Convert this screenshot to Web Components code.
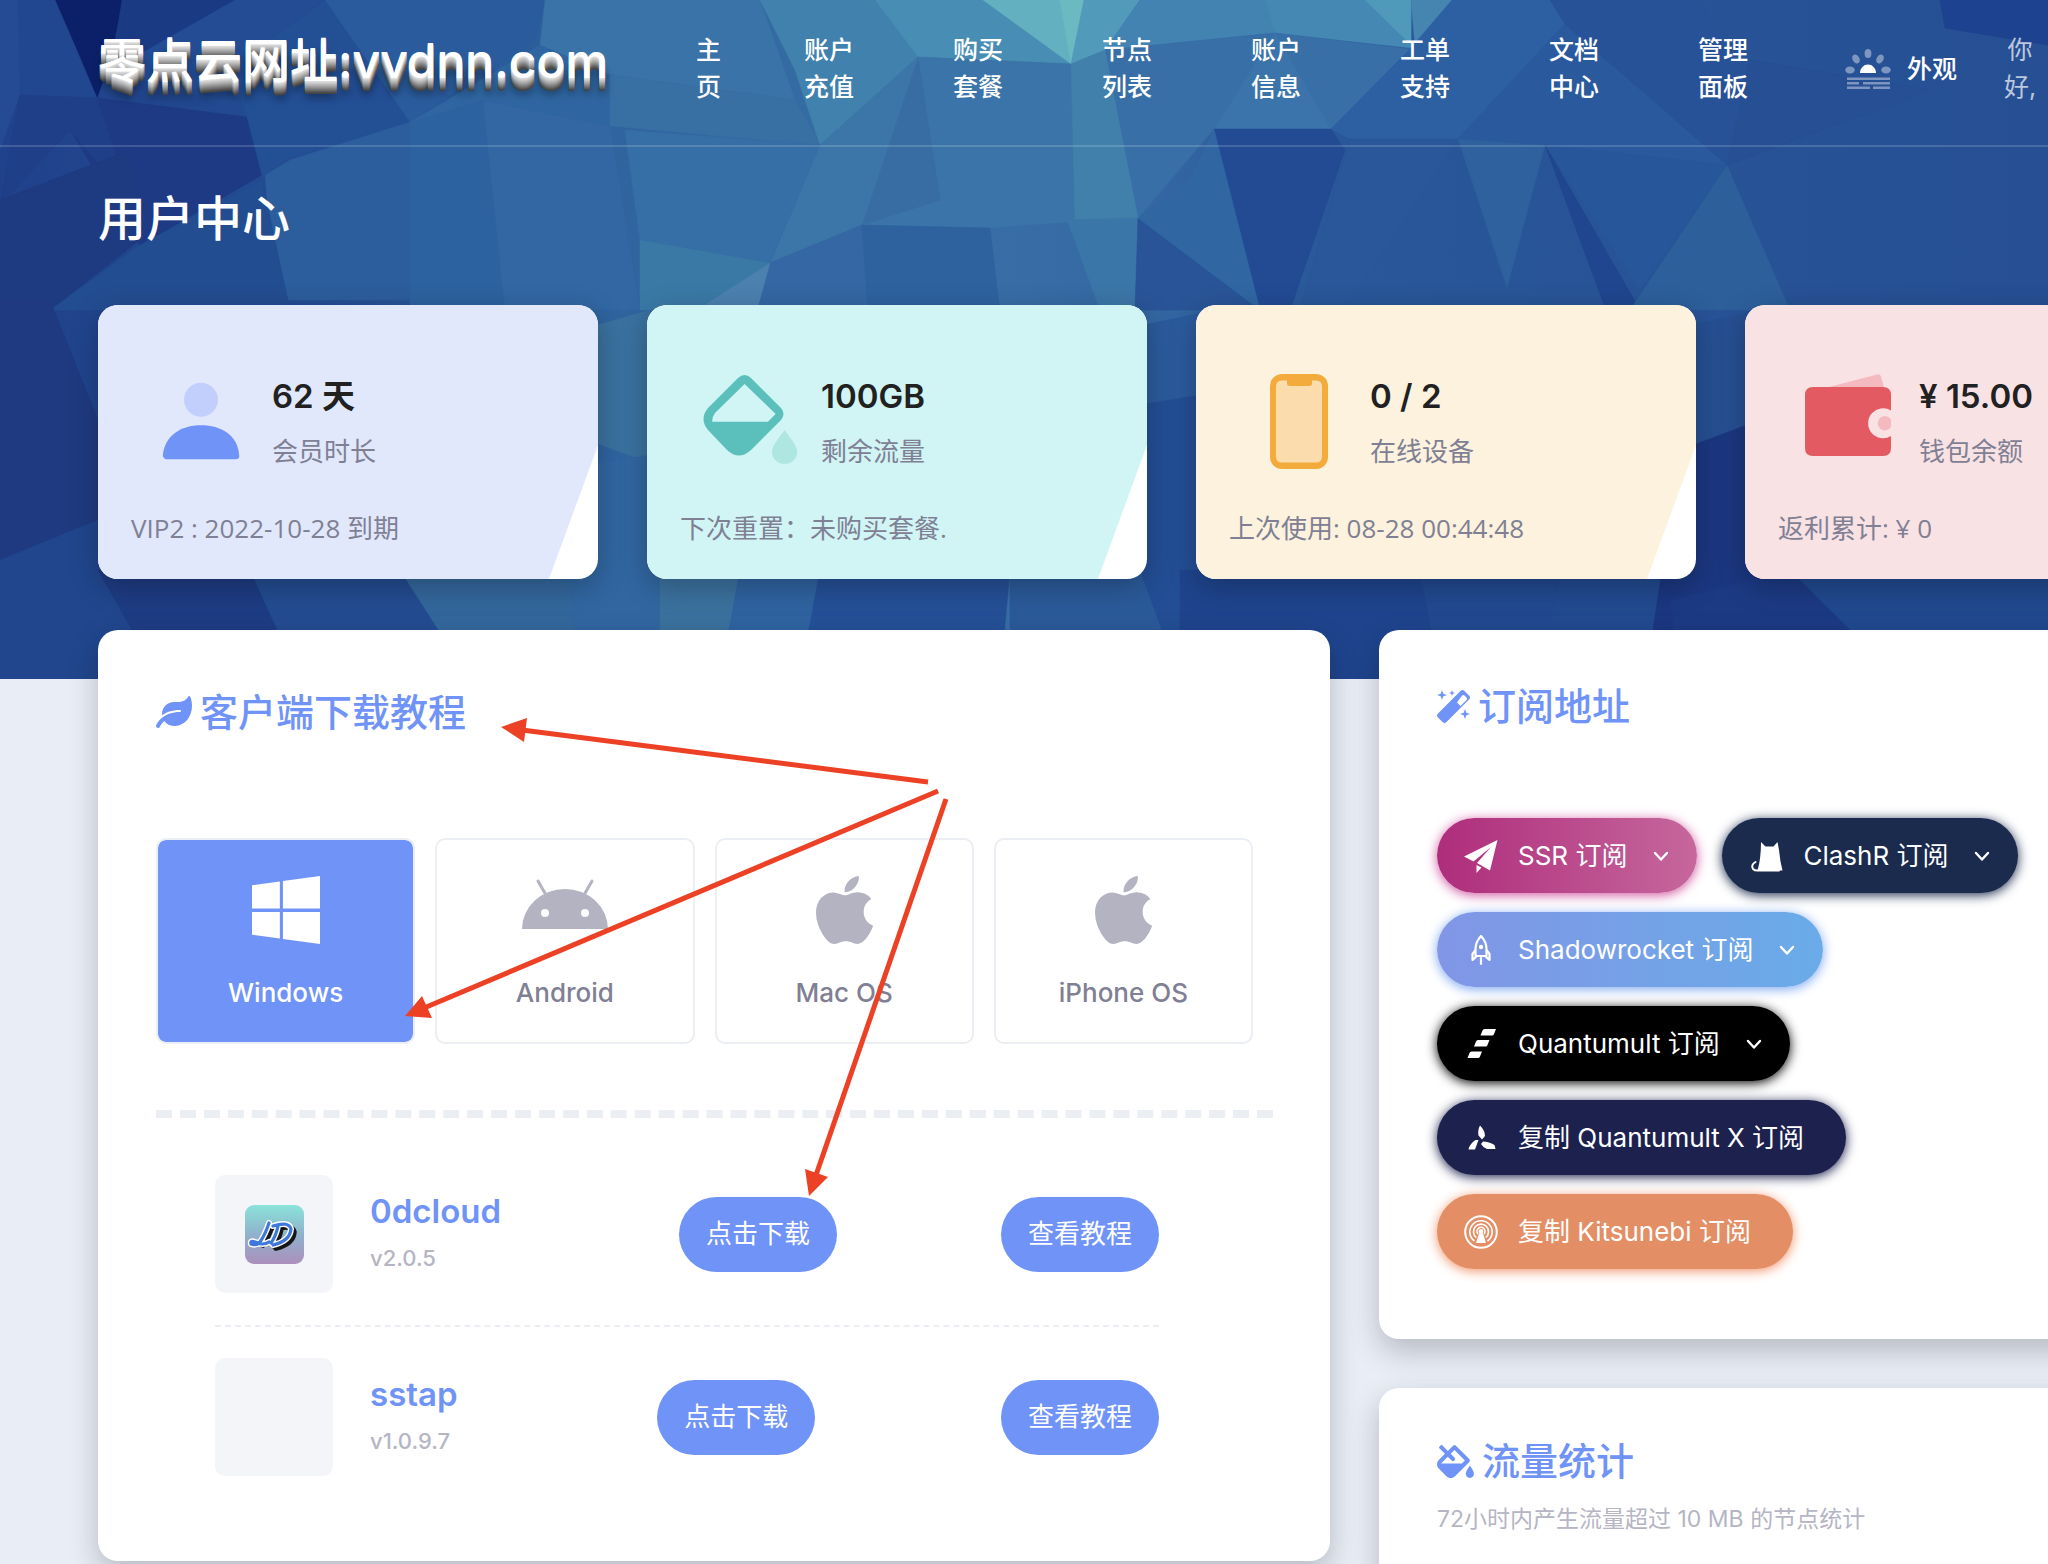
<!DOCTYPE html>
<html lang="zh-CN">
<head>
<meta charset="utf-8">
<meta name="viewport" content="width=device-width, initial-scale=1">
<title>用户中心</title>
<style>
  html, body { margin: 0; height: 100%; }
  body {
    overflow: hidden;
    background: #e9edf6;
    font-family: Inter, "Noto Sans CJK SC", sans-serif;
    font-size: 26px;
    color: #7f8094;
  }
</style>
</head>
<body>
<user-dashboard></user-dashboard>

<script>
const ICONS = {
  sunrise: [46, 41, '0 0 46 41', `<g fill="#fff" opacity=".4"><ellipse cx="23" cy="4.500" rx="3.400" ry="4.500"/><ellipse cx="11" cy="10" rx="3.400" ry="4.800" transform="rotate(-32 11 10)"/><ellipse cx="35" cy="10" rx="3.400" ry="4.800" transform="rotate(32 35 10)"/><ellipse cx="5" cy="21" rx="4.800" ry="3.500"/><ellipse cx="41" cy="21" rx="4.800" ry="3.500"/><path d="M2 28.500h43v2.500H2zM2 33h12v2.500H2zM18 33h27v2.500H18zM2 37.500h23v2.500H2zM28 37.500h17v2.500H28z"/></g><path fill="#fff" d="M15 24a8 8.500 0 0 1 16 0z"/>`],
  user: [102, 102, '0 0 24 24', `<circle cx="12" cy="7" r="4" fill="#c2cffc"/><path fill="#7093f8" d="M3 20.200C3.390 15.430 7.260 13 11.980 13 16.770 13 20.700 15.290 21 20.200c.01.2 0 .8-.75.8H3.730c-.25 0-.75-.54-.73-.8z"/>`],
  bucket: [102, 102, '0 0 102 102', `<path fill="#5bc0bc" fill-rule="evenodd" d="M39 8q6.600-6 13 0L82 38q5 6 0 12L52 80q-12 11-24 0L9 60Q0 49 9 38zM45.600 14 16 43q-3 4-2.800 8.700h55.700l7.800-7.700z"/><path fill="#aee7e2" d="M85.600 60C80 68 73 75 73 82a12.600 12 0 0 0 25.200 0c0-7-7-14-12.600-22z"/>`],
  phone: [102, 102, '0 0 102 102', `<rect x="22" y="4" width="58" height="95" rx="12" fill="#f3ac3c"/><path fill="#fadcad" d="M34 10.500h5v3q0 2.500 3 2.500h19q3 0 3-2.500v-3h4q6 0 6 6v70q0 6-6 6H34q-6 0-6-6v-70q0-6 6-6z"/>`],
  wallet: [102, 102, '0 0 102 102', `<path fill="#f5b9c0" d="M32 17 80 4.500q3-1 4 2L87 17z"/><path fill="#e45a63" d="M16 17h70q8 0 8 8v15.500A15 15 0 1 0 94 66v12q0 8-8 8H16q-8 0-8-8V25q0-8 8-8z"/><path fill="#f5b9c0" d="M94 49.500v7.500a7.200 7.200 0 1 1 0-7.500z"/>`],
  leaf: [36, 32, '0 0 576 512', `<path fill="currentColor" d="M546.200 9.700c-5.600-12.500-21.600-13-28.300-1.200C486.900 62.400 431.400 96 368 96h-80C182 96 96 182 96 288c0 7 .8 13.700 1.500 20.500C161.300 262.800 253.400 224 384 224c8.800 0 16 7.200 16 16s-7.200 16-16 16C132.600 256 26 410.100 2.400 468c-6.600 16.300 1.200 34.900 17.500 41.600 16.400 6.800 35-1.100 41.800-17.300 1.500-3.600 20.900-47.900 71.900-90.600 32.400 43.900 94 85.800 174.900 77.200C465.500 467.500 576 326.700 576 154.300c0-50.200-10.800-102.200-29.800-144.600z"/>`],
  wand: [33, 33, '0 0 33 33', `<g fill="currentColor"><path fill-rule="evenodd" d="M1 23.500 23.500 1q2-2 4 0L32 5.500q2 2 0 4L9.500 32q-2 2-4 0L1 27.500q-2-2 0-4zM20 12.500l3.500 3.500 6-6q1-1.500 0-2.500l-2-2q-1-1-2.500 0z"/><path d="M5 0 6.300 3.700 10 5 6.300 6.300 5 10 3.700 6.300 0 5l3.700-1.300zM15 0l.8 2.200L18 3l-2.200.8L15 6l-.8-2.200L12 3l2.200-.8zM28 19l1.300 3.700L33 24l-3.700 1.300L28 29l-1.300-3.700L23 24l3.700-1.300z"/></g>`],
  drip: [37, 33, '0 0 576 512', `<path fill="currentColor" d="M512 320s-64 92.650-64 128c0 35.350 28.660 64 64 64s64-28.650 64-64-64-128-64-128zm-9.370-102.940L294.940 9.370C288.690 3.120 280.500 0 272.310 0s-16.380 3.120-22.620 9.370l-81.580 81.580L81.930 4.760c-6.250-6.250-16.380-6.250-22.620 0L36.690 27.380c-6.240 6.250-6.240 16.380 0 22.620l86.190 86.180-94.760 94.760c-37.490 37.480-37.490 98.260 0 135.750l117.190 117.190c18.740 18.740 43.310 28.120 67.870 28.120 24.570 0 49.130-9.370 67.870-28.120l221.570-221.570c12.500-12.500 12.500-32.750.01-45.250zm-116.220 70.970H65.930c1.360-3.840 3.570-7.980 7.430-11.830l13.150-13.150 81.610-81.610 58.600 58.600c12.490 12.490 32.750 12.490 45.240 0s12.490-32.750 0-45.240l-58.610-58.600 58.950-58.950 162.440 162.440-48.340 48.340z"/>`],
  windows: [68, 68, '0 32 448 448', `<path fill="currentColor" d="M0 93.700l183.600-25.300v177.400H0V93.700zm0 324.600l183.600 25.300V268.400H0v149.900zm203.800 28L448 480V268.400H203.800v177.900zm0-380.600v180.100H448V32L203.800 65.700z"/>`],
  android: [86, 68, '0 0 86 68', `<path fill="currentColor" fill-rule="evenodd" d="M0 53a43 40 0 0 1 86 0zM23 41a4 4 0 1 0 0-8 4 4 0 0 0 0 8zM63 41a4 4 0 1 0 0-8 4 4 0 0 0 0 8z"/><path stroke="currentColor" stroke-width="3" stroke-linecap="round" d="M16 5l8 14M70 5l-8 14"/>`],
  apple: [57, 68, '4 32 376 448', `<path fill="currentColor" d="M318.700 268.700c-.2-36.700 16.400-64.400 50-84.800-18.800-26.900-47.200-41.700-84.700-44.600-35.500-2.800-74.300 20.700-88.500 20.700-15 0-49.400-19.700-76.400-19.700C63.300 141.200 4 184.800 4 273.500q0 39.300 14.400 81.200c12.800 36.700 59 126.700 107.200 125.200 25.200-.6 43-17.900 75.800-17.900 31.800 0 48.300 17.900 76.400 17.900 48.600-.7 90.400-82.500 102.600-119.300-65.200-30.700-61.700-90-61.700-91.900zm-56.600-164.200c27.300-32.400 24.800-61.900 24-72.500-24.100 1.400-52 16.400-67.900 34.900-17.500 19.800-27.800 44.300-25.600 71.900 26.100 2 49.900-11.400 69.500-34.300z"/>`],
  plane: [34, 34, '0 0 34 34', `<path fill="currentColor" d="M33.500 1 0 17.500l9.500 5L27 8 13 24l13 7.500zM12.500 26v8l5-5.500z"/>`],
  cat: [34, 34, '0 0 34 34', `<path fill="currentColor" d="M12 3l4.500 4.500h8L28.500 3l1.500 8q1 11 3.500 20.500H8.500Q12 20 12 3z"/><path fill="none" stroke="currentColor" stroke-width="2" stroke-linecap="round" d="M6.500 23q-5 3-2.500 7 2 2 6 1.500h20"/>`],
  rocket: [34, 34, '0 0 34 34', `<g fill="none" stroke="currentColor" stroke-width="2.200" stroke-linejoin="round"><path d="M17 3q-5.500 6-5.500 13v7h11v-7Q22.500 9 17 3z"/><path d="M11.500 17 8.500 21v6l4-3.500M22.500 17l3 4v6l-4-3.500"/><path d="M17 25v6" stroke-linecap="round"/></g><circle cx="17" cy="14" r="2.200" fill="currentColor"/>`],
  bars: [34, 34, '0 0 34 34', `<path fill="currentColor" d="M18.500 3.500q.5-1.500 2-1.500H32l-2 5q-.5 1.500-2 1.500H16.500zM12 14.500q.5-1.500 2-1.500h11.500l-2 5q-.5 1.500-2 1.500H10zM5.500 26q.5-1.500 2-1.500H18l-2 5q-.5 1.500-2 1.500H3.500z"/>`],
  blades: [34, 34, '0 0 34 34', `<path fill="currentColor" d="M16 4.500q5 5 5 10.500l-3 3.500-3.500-4Q13.500 9 16 4.500zM14.500 19l-3.500 9.500H4.500q1-5.500 7-9.500zM19 20.500q6 0 11.500 3.500l1 4H23q-4-1.500-6-5z"/>`],
  podcast: [34, 34, '0 0 34 34', `<g fill="none" stroke="currentColor"><circle cx="17" cy="17" r="15.800" stroke-width="2"/><path stroke-width="1.600" d="M10.500 26a11.200 11.200 0 1 1 13 0M12.300 22.500a7.500 7.500 0 1 1 9.400 0M14 19a4 4 0 1 1 6 0"/></g><circle cx="17" cy="16.500" r="2.400" fill="currentColor"/><path fill="currentColor" d="M15 18.500h4l3 9.500H12z"/>`],
  chevron: [16, 16, '0 0 16 16', `<path fill="none" stroke="currentColor" stroke-width="2.400" stroke-linecap="round" stroke-linejoin="round" d="M2 5l6 6.500L14 5"/>`],
  ld: [59, 59, '0 0 59 59', `<defs><linearGradient id="g" x1="0" y1="0" x2="0" y2="1"><stop offset="0" stop-color="#8be3da"/><stop offset=".5" stop-color="#8fb2cb"/><stop offset="1" stop-color="#ab8fbd"/></linearGradient></defs><rect width="59" height="59" rx="9" fill="url(#g)"/><g fill="none" stroke-linecap="round" stroke-linejoin="round"><path transform="translate(3 3)" stroke="#161616" stroke-width="5.500" d="M24 18q-4 12-9 19M33 21q-2 10-7 17M28 21q16-5 18 3-1 12-18 16"/><path stroke="#fff" stroke-width="6" d="M24 18q-4 12-9 19-4 4-9 2-1-4 4-2 8 4 14 0M33 21q-2 10-7 17M28 21q16-5 18 3-1 12-18 16"/><path stroke="#3f78dc" stroke-width="3.200" d="M24 18q-4 12-9 19-4 4-9 2-1-4 4-2 8 4 14 0M33 21q-2 10-7 17M28 21q16-5 18 3-1 12-18 16"/></g>`]
};

/* Shared base: renders the class template into an open shadow root. */
class Part extends HTMLElement {
  connectedCallback() {
    if (this.shadowRoot) return;
    const t = document.createElement('template');
    t.innerHTML = this.view();
    this.attachShadow({ mode: 'open' }).append(t.content.cloneNode(true));
  }
  at(n) { return this.getAttribute(n) || ''; }
}

customElements.define('svg-icon', class extends Part {
  view() {
    const [w, h, box, body] = ICONS[this.at('name')];
    return `<style>:host{display:block;flex:none}svg{display:block}</style>
      <svg width="${w}" height="${h}" viewBox="${box}" fill="none" aria-hidden="true">${body}</svg>`;
  }
});

customElements.define('nav-item', class extends Part {
  view() {
    return `<style>
      :host{display:block;flex:none;width:66px}
      :host([short]){width:25px}
      a{display:block;color:#fff;text-decoration:none;font-size:25px;line-height:37px;font-weight:500}
    </style><a href="#"><slot></slot></a>`;
  }
});

customElements.define('site-header', class extends Part {
  view() {
    return `<style>
      :host{display:block;border-bottom:2px solid rgba(255,255,255,.16)}
      .bar{display:flex;align-items:center;padding:32px 98px 39px;min-width:2147px}
      .logo{flex:0 0 598px;font-size:48px;line-height:58px;padding-bottom:16px;font-weight:500;color:#fff;text-decoration:none;white-space:nowrap;
        text-shadow:0 1px 0 #ddd,0 2px 0 #d2d2d2,0 3px 0 #c6c6c6,0 4px 0 #bababa,0 5px 0 #adadad,0 6px 0 #a0a0a0,0 7px 0 #929292,0 8px 0 #848484,0 9px 0 #767676,0 10px 0 #686868,0 11px 0 #5a5a5a,0 12px 0 #4c4c4c,0 13px 0 #444,0 16px 8px rgba(0,0,0,.5)}
      nav{display:flex;gap:83px}
      button{display:flex;align-items:center;gap:16px;margin-left:81px;padding:0;border:0;background:none;color:#fff;font:500 25px/37px Inter,"Noto Sans CJK SC",sans-serif;white-space:nowrap}
      .hello{width:34px;margin-left:46px;font-size:25px;line-height:37px;text-align:center;color:rgba(255,255,255,.7)}
    </style>
    <header class="bar">
      <a class="logo" href="#">零点云网址:vvdnn.com</a>
      <nav>
        <nav-item short>主页</nav-item><nav-item>账户充值</nav-item><nav-item>购买套餐</nav-item>
        <nav-item>节点列表</nav-item><nav-item>账户信息</nav-item><nav-item>工单支持</nav-item>
        <nav-item>文档中心</nav-item><nav-item>管理面板</nav-item>
      </nav>
      <button type="button"><svg-icon name="sunrise"></svg-icon>外观</button>
      <span class="hello">你好,</span>
    </header>`;
  }
});

customElements.define('stat-card', class extends Part {
  view() {
    return `<style>
      :host{display:block;border-radius:20px;background:#fff;overflow:hidden;box-shadow:0 8px 28px rgba(0,0,0,.25)}
      .tint{padding:65px 33px 32px;background:var(--tint);clip-path:polygon(0 0,100% 0,100% 140px,calc(100% - 49px) 100%,0 100%)}
      .top{display:flex;gap:20px;padding-left:19px}
      .value{font-size:33px;line-height:52px;font-weight:600;color:#212121;white-space:nowrap}
      .label{margin-top:11px;line-height:38px}
      .note{margin-top:37px;line-height:38px;font-family:"Open Sans","Noto Sans CJK SC",sans-serif;white-space:nowrap}
    </style>
    <div class="tint">
      <div class="top"><svg-icon name="${this.at('icon')}"></svg-icon>
        <div><div class="value">${this.at('value')}</div><div class="label">${this.at('label')}</div></div></div>
      <div class="note"><slot></slot></div>
    </div>`;
  }
});

customElements.define('panel-card', class extends Part {
  view() {
    return `<style>
      :host{display:block;box-sizing:border-box;border-radius:20px;background:#fff;padding:var(--top,52px) 57px var(--bottom,70px) 58px;box-shadow:0 12px 30px rgba(0,0,0,.22)}
      h2{display:flex;align-items:center;gap:8px;margin:0;font-size:38px;line-height:48px;font-weight:500;color:#7093f8}
    </style>
    <h2><svg-icon name="${this.at('icon')}"></svg-icon>${this.at('heading')}</h2><slot></slot>`;
  }
});

customElements.define('os-tile', class extends Part {
  view() {
    return `<style>
      :host{display:block;flex:1}
      button{display:flex;flex-direction:column;align-items:center;gap:30px;width:100%;box-sizing:border-box;padding:36px 0 30px;border:2px solid #ebeef3;border-radius:10px;background:#fff padding-box;color:#b3b3c2;font:500 26px/38px Inter,"Noto Sans CJK SC",sans-serif}
      span{color:#7f8094}
      :host([active]) button{background-color:#7093f8;color:#fff}
      :host([active]) span{color:#fff}
    </style><button type="button"><svg-icon name="${this.at('icon')}"></svg-icon><span><slot></slot></span></button>`;
  }
});

customElements.define('client-row', class extends Part {
  view() {
    const logo = this.at('icon') ? `<svg-icon name="${this.at('icon')}"></svg-icon>` : '';
    return `<style>
      :host{display:flex;align-items:center;justify-content:space-between}
      .app{display:flex;align-items:center;gap:37px;margin-right:14px}
      .thumb{display:grid;place-items:center;width:118px;height:118px;border-radius:10px;background:#f3f5f9}
      .name{display:block;font-size:33px;line-height:48px;font-weight:600;color:#7093f8;text-decoration:none}
      .ver{font-size:22px;line-height:46px;font-weight:500;color:#b5b5c3}
      .pill{display:block;padding:18px 27px 19px;border-radius:38px;background:#7093f8;color:#fff;text-decoration:none;font-size:26px;line-height:38px}
    </style>
    <div class="app"><div class="thumb">${logo}</div>
      <div><a class="name" href="#">${this.at('name')}</a><div class="ver">${this.at('version')}</div></div></div>
    <a class="pill" href="#">点击下载</a><a class="pill" href="#">查看教程</a>`;
  }
});

customElements.define('sub-button', class extends Part {
  view() {
    const menu = this.hasAttribute('menu');
    return `<style>
      :host{display:block}
      button{display:flex;align-items:center;height:75px;padding:0 ${menu ? 28 : 42}px 0 27px;border:0;border-radius:38px;background:var(--fill);box-shadow:0 2px 12px var(--glow);color:#fff;font:400 26px/38px Inter,"Noto Sans CJK SC",sans-serif;white-space:nowrap}
      .text{margin-left:20px}
      .chev{margin-left:26px}
    </style>
    <button type="button"${menu ? ' aria-haspopup="menu"' : ''}><svg-icon name="${this.at('icon')}"></svg-icon><span class="text"><slot></slot></span>${menu ? '<svg-icon class="chev" name="chevron"></svg-icon>' : ''}</button>`;
  }
});

/* Low-poly sky behind the header and the stat cards. */
const POLYS = `55,0 122,0 112,55 97,98 75,45|#0b2068
122,0 235,0 112,70|#1a3a83
0,0 55,0 97,98 20,95|#20478f
0,0 18,0 20,95 0,150|#244b93
235,0 325,0 270,42 240,110 112,70|#234c94
97,98 247,117 262,175 140,245 70,130|#1e3a85
20,95 97,98 130,200 70,130 0,205|#203f89
325,0 410,122 290,158 262,176 247,117 240,100 270,40|#234f95
325,0 545,0 535,40 410,122|#2a5c9d
290,160 410,122 410,300 275,300 265,175|#2c5d9c
140,245 262,180 290,310 50,310|#234d91
130,150 140,240 50,310 0,310 0,200|#1e3a81
410,122 483,100 510,310 410,310|#2c629f
483,100 610,126 640,310 505,310|#3267a3
545,0 760,0 795,100 610,75 540,45|#3a73a7
540,45 610,75 610,126 483,100 410,122|#2f66a2
610,75 795,100 820,145 610,126|#3870a4
760,0 875,0 918,57 820,145 795,70|#4081ad
875,0 983,0 1024,30 1071,64 918,57|#488db3
983,0 1084,0 1071,64|#63b0c1
1060,0 1084,0 1071,64|#6bbac2
1084,0 1140,0 1105,50 1071,64|#529ab9
1140,0 1270,0 1275,33 1105,50|#4283b2
1265,0 1411,0 1411,48 1275,33|#4588b3
1365,0 1411,0 1411,45|#4f99ba
1411,0 1452,0 1415,47|#4585b0
1105,50 1275,33 1410,49 1331,129 1214,129 1138,218|#396fa7
1275,33 1305,85 1331,129 1214,129|#3b74aa
1452,0 1550,0 1565,24 1458,139 1350,139 1331,129 1410,49|#2d60a2
1565,24 1727,165 1545,145 1458,139|#2a5a9d
1214,129 1331,129 1345,150 1290,310 1260,310|#224b94
1350,139 1458,139 1345,310 1300,310|#295799
1458,139 1545,145 1507,288|#2e619d
1545,145 1606,310 1640,310|#1f468f
1545,145 1727,165 1640,290|#28569a
1550,0 1700,0 1710,20 1750,60 1727,165 1565,24|#275297
1727,165 1790,310 1630,310|#2d5f9b
1750,60 1930,90 1727,165|#264f94
1940,0 2048,0 2048,45 1945,28|#1d428f
918,57 1071,64 1138,218 1024,225 990,228 862,225|#3b74a8
918,57 940,200 862,225|#386da3
1071,64 1105,50 1138,218 1075,220|#4080aa
820,145 918,57 862,225 770,263|#3c76a8
625,130 820,145 770,263 640,240|#366ea6
640,240 770,263 700,310 640,310|#3a79a6
770,263 862,225 890,310 750,310|#3467a3
770,263 757,310 697,310|#4b80af
862,225 990,228 1020,480 880,480|#2e629f
1067,220 1138,218 1135,310 1100,310|#3b76a8
1138,218 1260,310 1135,310|#295497
1138,218 1190,180 1214,129 1260,310|#3066a2
0,300 50,300 98,420 98,600 0,560|#1f3a80
0,560 98,520 160,679 0,679|#21468d
98,570 250,570 300,679 160,679|#1e3c84
250,570 400,570 470,640 300,679|#234c91
400,570 600,570 600,679 470,679|#33679c
580,330 650,310 670,470 560,430|#3a719f
560,470 680,450 700,679 580,679|#3166a0
660,570 740,570 730,679 660,679|#3b719e
740,570 820,570 800,679 720,679|#2f63a0
820,570 1010,570 1000,679 800,679|#255097
1010,570 1140,570 1180,679 1010,679|#2b5a99
1120,330 1215,310 1230,390 1110,410|#2b5a9c
1110,410 1230,390 1260,560 1200,679 1180,679 1140,570|#234e95
1180,570 1420,570 1440,679 1180,679|#1f448d
1420,570 1560,570 1540,679 1440,679|#224990
1560,570 1700,570 1680,679 1540,679|#224a90
1670,330 1760,310 1780,420 1660,500|#264f92
1680,450 1760,420 1780,600 1650,650|#1b3780
1670,600 1790,570 1900,679 1680,679|#1c3a84
1790,570 2048,570 2048,679 1900,679|#21498f`.split('\n').map(r => {
  const [p, c] = r.split('|');
  return `<polygon points="${p}" fill="${c}" stroke="${c}" stroke-width=".5"/>`;
}).join('');
const SKY = `<svg xmlns="http://www.w3.org/2000/svg" viewBox="0 0 2048 679" preserveAspectRatio="none"><defs><linearGradient id="b"><stop offset="0" stop-color="#20418b"/><stop offset=".15" stop-color="#234c93"/><stop offset=".3" stop-color="#2f649f"/><stop offset=".45" stop-color="#3970a6"/><stop offset=".55" stop-color="#3569a4"/><stop offset=".65" stop-color="#295799"/><stop offset="1" stop-color="#264f94"/></linearGradient></defs><rect width="2048" height="679" fill="url(#b)"/>${POLYS}</svg>`;

customElements.define('user-dashboard', class extends Part {
  view() {
    return `<style>
      :host{display:block;position:relative;height:100%}
      .hero{padding-bottom:100px;overflow:hidden;background:url("data:image/svg+xml,${encodeURIComponent(SKY).replace(/'/g, '%27')}") 0 0/100% 100%}
      .wrap{box-sizing:border-box;min-width:2343px;padding:0 98px;display:grid;grid-template-columns:repeat(12,1fr);column-gap:49px}
      h1{grid-column:1/-1;margin:36px 0 50px;font-size:48px;line-height:72px;font-weight:500;color:#fff}
      stat-card{grid-column:span 3}
      .panels{margin-top:-49px;align-items:start}
      .clients{grid-column:span 7;--top:58px;--bottom:85px}
      .side{grid-column:span 5;display:flex;flex-direction:column;gap:49px}
      .os{display:flex;margin-top:102px}
      os-tile{margin-right:20px}
      .rule{margin:66px 0 57px;border:0;border-top:8px dashed #ebeef2}
      .rows{margin:0 114px 0 59px}
      client-row + client-row{margin-top:32px;padding-top:31px;border-top:2px dashed #ebeef2}
      .subs{display:flex;flex-wrap:wrap;gap:19px 25px;margin-top:88px}
      .subs sub-button.row{margin-right:30%}
      .traffic{--top:49px;--bottom:300px}
      .traffic p{margin:16px 0 0;font-size:23px;line-height:36px;color:#b5b5c3}
      .marks{position:absolute;left:0;top:0;pointer-events:none}
    </style>
    <div class="hero">
      <site-header></site-header>
      <div class="wrap">
        <h1>用户中心</h1>
        <stat-card style="--tint:#e1e8fc" icon="user" value="62 天" label="会员时长">VIP2 : 2022-10-28 到期</stat-card>
        <stat-card style="--tint:#d1f5f4" icon="bucket" value="100GB" label="剩余流量">下次重置：未购买套餐.</stat-card>
        <stat-card style="--tint:#fdf2de" icon="phone" value="0 / 2" label="在线设备">上次使用: 08-28 00:44:48</stat-card>
        <stat-card style="--tint:#f9e2e4" icon="wallet" value="¥ 15.00" label="钱包余额">返利累计: ¥ 0</stat-card>
      </div>
    </div>
    <main class="wrap panels">
      <panel-card class="clients" icon="leaf" heading="客户端下载教程">
        <div class="os">
          <os-tile active icon="windows">Windows</os-tile>
          <os-tile icon="android">Android</os-tile>
          <os-tile icon="apple">Mac OS</os-tile>
          <os-tile icon="apple">iPhone OS</os-tile>
        </div>
        <hr class="rule">
        <div class="rows">
          <client-row icon="ld" name="0dcloud" version="v2.0.5"></client-row>
          <client-row name="sstap" version="v1.0.9.7"></client-row>
        </div>
      </panel-card>
      <div class="side">
        <panel-card icon="wand" heading="订阅地址">
          <div class="subs">
            <sub-button menu icon="plane" style="--fill:linear-gradient(90deg,#ae2d7b,#c6679d);--glow:#d0549f">SSR 订阅</sub-button>
            <sub-button menu icon="cat" style="--fill:#1b2b4d;--glow:#1b2b4d">ClashR 订阅</sub-button>
            <sub-button class="row" menu icon="rocket" style="--fill:linear-gradient(90deg,#8196e6,#6aabe8);--glow:#79a5f0">Shadowrocket 订阅</sub-button>
            <sub-button class="row" menu icon="bars" style="--fill:#000;--glow:#000">Quantumult 订阅</sub-button>
            <sub-button class="row" icon="blades" style="--fill:#1d214e;--glow:#1d214e">复制 Quantumult X 订阅</sub-button>
            <sub-button class="row" icon="podcast" style="--fill:#e48e65;--glow:#f0936a">复制 Kitsunebi 订阅</sub-button>
          </div>
        </panel-card>
        <panel-card class="traffic" icon="drip" heading="流量统计">
          <p>72小时内产生流量超过 10 MB 的节点统计</p>
        </panel-card>
      </div>
    </main>
    <svg class="marks" width="960" height="1210" viewBox="0 0 960 1210" aria-hidden="true">
      <g stroke="#ec4125" stroke-width="5"><path d="M928 782 522 730"/><path d="M938 791 424 1008"/><path d="M946 799 815 1178"/></g>
      <path fill="#ec4125" d="M501 727l26-9-3 24zM405 1016l17-20 10 22zM809 1196l-4-27 23 8z"/>
    </svg>`;
  }
});
</script>
</body>
</html>
